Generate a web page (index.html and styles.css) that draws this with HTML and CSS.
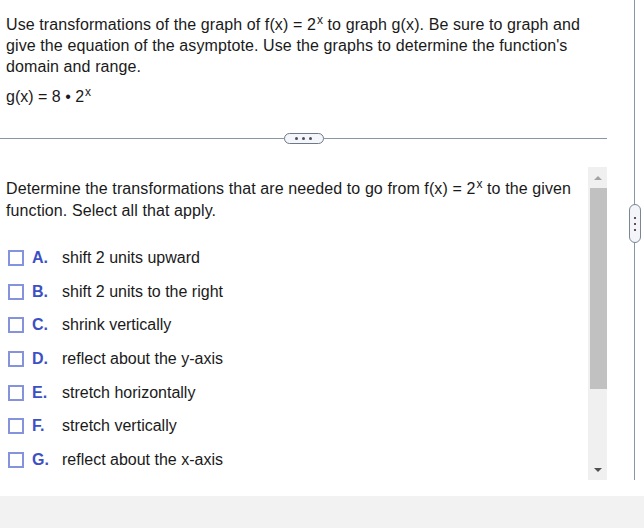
FILE: index.html
```html
<!DOCTYPE html>
<html>
<head>
<meta charset="utf-8">
<link rel="stylesheet" href="styles.css">
</head>
<body>
<div class="wrap">
  <div class="content">
    <div class="question">
      <p class="qtext">Use transformations of the graph of f(x) = 2<sup>x</sup> to graph g(x). Be sure to graph and give the equation of the asymptote. Use the graphs to determine the function's domain and range.</p>
      <p class="eq">g(x) = 8 &bull; 2<sup>x</sup></p>
    </div>
    <div class="divider">
      <span class="line"></span>
      <span class="more"><i></i><i></i><i></i></span>
      <span class="line"></span>
    </div>
    <div class="panel">
      <div class="scroll">
        <p class="prompt">Determine the transformations that are needed to go from f(x) = 2<sup>x</sup> to the given function. Select all that apply.</p>
        <ul class="options">
          <li><span class="box"></span><b>A.</b><span>shift 2 units upward</span></li>
          <li><span class="box"></span><b>B.</b><span>shift 2 units to the right</span></li>
          <li><span class="box"></span><b>C.</b><span>shrink vertically</span></li>
          <li><span class="box"></span><b>D.</b><span>reflect about the y-axis</span></li>
          <li><span class="box"></span><b>E.</b><span>stretch horizontally</span></li>
          <li><span class="box"></span><b>F.</b><span>stretch vertically</span></li>
          <li><span class="box"></span><b>G.</b><span>reflect about the x-axis</span></li>
        </ul>
      </div>
      <div class="scrollbar">
        <div class="arrow up"></div>
        <div class="thumb"></div>
        <div class="track"></div>
        <div class="arrow down"></div>
      </div>
    </div>
  </div>
  <div class="rail">
    <span class="handle"><i></i><i></i><i></i></span>
  </div>
</div>
<div class="gap"></div>
<div class="footer"></div>
</body>
</html>
```
FILE: styles.css
```css
* { box-sizing: border-box; }
html, body { margin: 0; padding: 0; background: #fff; }
body {
  font-family: "Liberation Sans", Arial, sans-serif;
  font-size: 16px;
  color: #1a1a1a;
  width: 644px;
  height: 528px;
  overflow: hidden;
}
.wrap {
  display: flex;
  height: 480px;
}
.content {
  width: 635px;
  border-right: 1px solid #8c95a6;
  display: flex;
  flex-direction: column;
}
.rail {
  position: relative;
  width: 9px;
}
.handle {
  position: absolute;
  left: -6px;
  top: 204px;
  width: 12px;
  height: 39px;
  border: 1.5px solid #7c8696;
  border-radius: 6px;
  background: #f3f5f8;
  display: flex;
  flex-direction: column;
  align-items: center;
  justify-content: center;
  gap: 4px;
}
.handle i {
  width: 2px;
  height: 2px;
  background: #6a4a5a;
  display: block;
}
.question {
  padding: 14px 0 0 6px;
}
p { margin: 0; }
.qtext {
  line-height: 21px;
  width: 585px;
  letter-spacing: 0.1px;
}
.eq {
  line-height: 21px;
  margin-top: 9px;
}
sup {
  font-size: 12px;
  line-height: 0;
  vertical-align: 6px;
  margin-left: 1px;
}
.divider {
  display: flex;
  align-items: center;
  width: 607px;
  margin-top: 26px;
  height: 11px;
}
.line {
  flex: 1;
  height: 1px;
  background: #8c95a6;
}
.more {
  width: 40px;
  height: 11px;
  border: 1px solid #6f7888;
  border-radius: 6px;
  background: #f4f6f9;
  display: flex;
  align-items: center;
  justify-content: center;
  gap: 4px;
}
.more i {
  display: block;
  width: 3px;
  height: 3px;
  border-radius: 50%;
  background: #4a5060;
}
.panel {
  display: flex;
  margin-top: 23px;
  height: 314px;
  width: 607px;
}
.scroll {
  width: 588px;
  padding: 11px 0 0 6px;
}
.prompt {
  line-height: 22px;
  letter-spacing: 0.1px;
}
.options {
  list-style: none;
  margin: 26px 0 0 0;
  padding: 0;
  display: flex;
  flex-direction: column;
  gap: 13.67px;
}
.options li {
  display: flex;
  align-items: center;
  height: 20px;
}
.box {
  width: 16px;
  height: 16px;
  border: 2px solid #8593dc;
  margin-left: 2px;
  margin-right: 8px;
  flex: none;
}
.options b {
  color: #3c50c4;
  width: 30px;
  flex: none;
}
.scrollbar {
  width: 19px;
  background: #f0f0f0;
  display: flex;
  flex-direction: column;
}
.arrow {
  height: 21px;
  display: flex;
  align-items: center;
  justify-content: center;
  flex: none;
}
.arrow::before {
  content: "";
  width: 0;
  height: 0;
  border-left: 4px solid transparent;
  border-right: 4px solid transparent;
}
.up::before { border-bottom: 4px solid #a3a3a3; }
.down::before { border-top: 4px solid #505050; }
.thumb {
  height: 201px;
  margin-left: 2px;
  background: #c1c1c1;
  flex: none;
}
.track { flex: 1; }
.gap { height: 16px; }
.footer {
  height: 32px;
  background: #f2f2f2;
}
```
